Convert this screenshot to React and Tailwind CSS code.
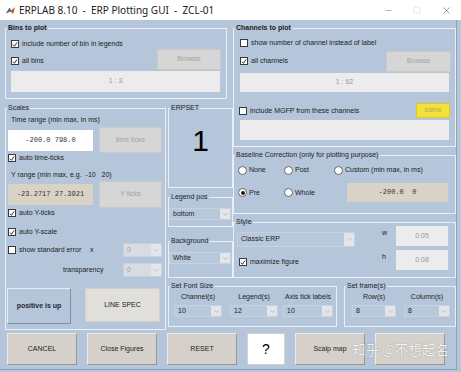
import React from "react";
import { ChevronDown, Minus, Square, X } from "lucide-react";

const FONT = { fontFamily: '"Liberation Sans", Arial, sans-serif' };

const Check = ({ checked }) => (
  <span className="w-[8px] h-[8px] bg-white border border-[#3a3a3a] flex items-center justify-center shrink-0">
    {checked && (
      <svg viewBox="0 0 8 8" className="w-[7px] h-[7px]">
        <path d="M1.2 4.2 L3.2 6.4 L6.8 1.2" fill="none" stroke="#1d1d1d" strokeWidth="1.2" />
      </svg>
    )}
  </span>
);

const CheckRow = ({ checked, label, className = "" }) => (
  <div className={`flex items-center gap-[3px] h-[8px] ${className}`}>
    <Check checked={checked} />
    <span className="text-[7px] leading-[8px] text-[#1c1c1c] whitespace-nowrap">{label}</span>
  </div>
);

const Radio = ({ on, label, className = "" }) => (
  <div className={`flex items-center gap-[2px] ${className}`}>
    <span className="w-[9px] h-[9px] rounded-full bg-white border border-[#666] flex items-center justify-center shrink-0">
      {on && <span className="w-[4px] h-[4px] rounded-full bg-[#1a1a1a]" />}
    </span>
    <span className="text-[7px] leading-[8px] text-[#1c1c1c] whitespace-nowrap">{label}</span>
  </div>
);

const Panel = ({ title, bold, className = "", children }) => (
  <fieldset className={`border border-[#e9eff6] min-w-0 p-0 ${className}`}>
    <legend
      className={`ml-[1px] px-[1px] text-[7px] leading-[8px] text-[#1c1c1c] ${bold ? "font-bold" : ""}`}
    >
      {title}
    </legend>
    {children}
  </fieldset>
);

const Drop = ({ value, className = "", disabled }) => (
  <div
    className={`flex items-stretch border border-[#c6d2e0] ${disabled ? "bg-[#d8dce2]" : "bg-[#b9c9dc]"} ${className}`}
  >
    <span
      className={`flex-1 flex items-center pl-[3px] text-[7px] ${disabled ? "text-[#9aa0a8]" : "text-[#1c1c1c]"}`}
    >
      {value}
    </span>
    <span className="w-[10px] bg-[#e2e5e9] flex items-center justify-center">
      <ChevronDown size={7} strokeWidth={1.5} color="#8a8f96" />
    </span>
  </div>
);

const GrayBtn = ({ label, className = "" }) => (
  <div
    className={`flex items-center justify-center bg-[#d6d6d6] border border-[#c9c9c9] text-[7px] text-[#a2a2a2] ${className}`}
  >
    {label}
  </div>
);

const Field = ({ value, className = "", mono }) => (
  <div
    className={`flex items-center justify-center text-[7px] ${mono ? "font-mono" : ""} ${className}`}
    style={mono ? { fontFamily: '"Liberation Mono", monospace' } : undefined}
  >
    {value}
  </div>
);

const BottomBtn = ({ label, className = "" }) => (
  <div
    className={`h-[32px] flex items-center justify-center bg-[#d5d1ca] border border-t-[#ecebe8] border-l-[#ecebe8] border-r-[#9b988f] border-b-[#9b988f] text-[7px] text-[#1c1c1c] ${className}`}
  >
    {label}
  </div>
);

export default function App() {
  return (
    <div className="w-[461px] h-[372px] bg-[#b5c6db] overflow-hidden relative" style={FONT}>
      {/* title bar */}
      <div className="h-[20px] bg-white flex items-center">
        <svg viewBox="0 0 10 10" className="ml-[6px] w-[9px] h-[9px]">
          <path d="M0 8 L4 2 L6 5 L10 1 L8 9 L5 6 Z" fill="#c0552a" />
          <path d="M0 8 L4 2 L5 6 Z" fill="#3d6fa8" />
        </svg>
        <span
          className="ml-[4px] text-[10px] text-[#222] whitespace-pre"
          style={{ fontFamily: '"Noto Sans", "Open Sans", sans-serif' }}
        >
          ERPLAB 8.10  -  ERP Plotting GUI  -  ZCL-01
        </span>
        <div className="ml-auto flex items-center">
          <Minus size={9} strokeWidth={1} color="#333" className="mr-[20px]" />
          <Square size={8} strokeWidth={1} color="#bbb" className="mr-[20px]" />
          <X size={11} strokeWidth={1} color="#333" className="mr-[9px]" />
        </div>
      </div>

      {/* body */}
      <div className="w-[457px] border-r border-b border-[#8fa1b8] pl-[5px] pt-[4px] pb-[4px]">
        <div className="grid grid-cols-[161px_2px_59px_6px_104px_7px_112px] grid-rows-[75px_5px_43px_4px_37px_5px_21px_4px_9px_10px_41px_4px_45px_3px]">
          {/* Bins to plot */}
          <Panel title="Bins to plot" bold className="col-start-1 col-end-4 row-start-1 row-end-2">
            <CheckRow checked label="include number of bin in legends" className="mt-[7px] ml-[5px] h-[10px]" />
            <div className="flex items-start h-[21px]">
              <CheckRow checked label="all bins" className="mt-[8px] ml-[5px]" />
              <GrayBtn label="Browse" className="ml-auto mr-[5px] w-[64px] h-[21px]" />
            </div>
            <Field value="1 : 3" className="mt-[1px] ml-[5px] mr-[6px] h-[21px] bg-[#ececec] text-[#9a9a9a]" />
          </Panel>

          {/* Channels to plot */}
          <Panel title="Channels to plot" bold className="col-start-5 col-end-8 row-start-1 row-end-4">
            <CheckRow label="show number of channel instead of label" className="mt-[6px] ml-[6px] h-[10px]" />
            <div className="flex items-start h-[21px] mt-[3px]">
              <CheckRow checked label="all channels" className="mt-[6px] ml-[6px]" />
              <GrayBtn label="Browse" className="ml-auto mr-[4px] w-[65px] h-[21px]" />
            </div>
            <Field value="1 : 62" className="mt-[1px] ml-[6px] mr-[6px] h-[19px] bg-[#ececec] text-[#9a9a9a]" />
            <div className="flex items-center h-[15px] mt-[11px]">
              <CheckRow label="include MGFP from these channels" className="ml-[5px]" />
              <div className="ml-auto mr-[5px] w-[34px] h-[15px] bg-[#f4e13a] border border-[#d9c93a] flex items-center justify-center text-[7px] text-[#b7a65e]">
                same
              </div>
            </div>
            <div className="mt-[2px] ml-[6px] mr-[6px] h-[20px] bg-[#ececec]" />
          </Panel>

          {/* Scales */}
          <Panel title="Scales" className="col-start-1 col-end-2 row-start-3 row-end-15">
            <div className="mt-[4px] ml-[5px] text-[7px] leading-[8px] text-[#1c1c1c]">Time range (min max, in ms)</div>
            <div className="flex items-center h-[26px] mt-[3px] ml-[2px]">
              <Field mono value="-200.0 798.0" className="w-[85px] h-[21px] bg-white text-[#333]" />
              <GrayBtn label="time ticks" className="ml-[6px] w-[63px] h-[26px]" />
            </div>
            <CheckRow checked label="auto time-ticks" className="mt-[1px] ml-[2px]" />
            <div className="mt-[9px] ml-[5px] text-[7px] leading-[8px] text-[#1c1c1c] whitespace-pre">
              Y range (min max, e.g.  -10   20)
            </div>
            <div className="flex items-center h-[27px] mt-[2px] ml-[2px]">
              <Field mono value="-23.2717 27.3921" className="w-[85px] h-[21px] bg-[#d9d3c6] text-[#333]" />
              <GrayBtn label="Y ticks" className="ml-[6px] w-[63px] h-[27px]" />
            </div>
            <CheckRow checked label="auto Y-ticks" className="mt-[1px] ml-[2px]" />
            <CheckRow checked label="auto Y-scale" className="mt-[11px] ml-[2px]" />
            <div className="flex items-center h-[14px] mt-[7px] ml-[2px]">
              <div className="w-[80px]">
                <CheckRow label="show standard error" />
              </div>
              <span className="ml-[2px] w-[33px] text-[7px] text-[#1c1c1c]">x</span>
              <Drop disabled value="0" className="w-[39px] h-[14px]" />
            </div>
            <div className="flex items-center h-[14px] mt-[6px] ml-[57px]">
              <span className="w-[60px] text-[7px] text-[#1c1c1c]">transparency</span>
              <Drop disabled value="0" className="w-[39px] h-[14px]" />
            </div>
            <div className="flex items-start mt-[11px] ml-[1px]">
              <div className="w-[64px] h-[36px] flex items-center justify-center bg-[#b5c6db] border border-t-[#e6edf5] border-l-[#e6edf5] border-r-[#7f8fa3] border-b-[#7f8fa3] text-[7px] font-bold text-[#1e2a3a]">
                positive is up
              </div>
              <div className="ml-[14px] w-[75px] h-[34px] flex items-center justify-center bg-[#e1dfdb] border border-[#d2d0cb] text-[7px] text-[#222]">
                LINE SPEC
              </div>
            </div>
          </Panel>

          {/* ERPSET */}
          <Panel title="ERPSET" className="col-start-3 col-end-5 row-start-3 row-end-6">
            <div className="h-[56px] flex items-center justify-center text-[30px] text-black">1</div>
          </Panel>

          {/* Legend pos */}
          <Panel title="Legend pos" className="col-start-3 col-end-5 row-start-7 row-end-10">
            <Drop value="bottom" className="mt-[7px] mr-[1px] h-[12px]" />
          </Panel>

          {/* Background */}
          <Panel title="Background" className="col-start-3 col-end-5 row-start-11 row-end-12">
            <Drop value="White" className="mt-[7px] mr-[1px] h-[12px]" />
          </Panel>

          {/* Baseline */}
          <Panel title="Baseline Correction (only for plotting purpose)" className="col-start-5 col-end-8 row-start-5 row-end-8">
            <div className="flex items-center h-[10px] mt-[6px] ml-[4px]">
              <Radio label="None" className="w-[46px]" />
              <Radio label="Post" className="w-[50px]" />
              <Radio label="Custom (min max, in ms)" />
            </div>
            <div className="flex items-center h-[19px] mt-[8px] ml-[4px]">
              <Radio on label="Pre" className="w-[46px]" />
              <Radio label="Whole" className="w-[50px]" />
              <Field mono value="-200.0  0" className="ml-[13px] w-[101px] h-[19px] bg-[#d9d3c6] text-[#333] whitespace-pre" />
            </div>
          </Panel>

          {/* Style */}
          <Panel title="Style" className="col-start-5 col-end-8 row-start-9 row-end-12">
            <div className="flex items-start">
              <div className="ml-[3px] w-[118px]">
                <Drop value="Classic ERP" className="mt-[6px] h-[15px]" />
                <CheckRow checked label="maximize figure" className="mt-[11px] ml-[2px]" />
              </div>
              <div className="ml-[27px] flex flex-col">
                <div className="flex items-start h-[20px]">
                  <span className="w-[14px] mt-[3px] text-[7px] leading-[8px] text-[#1c1c1c]">w</span>
                  <Field value="0.05" className="w-[52px] h-[20px] bg-[#ececec] text-[#9a9a9a]" />
                </div>
                <div className="flex items-start h-[20px] mt-[4px]">
                  <span className="w-[14px] mt-[3px] text-[7px] leading-[8px] text-[#1c1c1c]">h</span>
                  <Field value="0.08" className="w-[52px] h-[20px] bg-[#ececec] text-[#9a9a9a]" />
                </div>
              </div>
            </div>
          </Panel>

          {/* Set Font Size */}
          <Panel title="Set Font Size" className="col-start-3 col-end-6 row-start-13 row-end-14">
            <div className="flex mt-[3px] ml-[5px]">
              <div className="w-[48px] flex flex-col items-center">
                <span className="text-[7px] leading-[8px] text-[#1c1c1c]">Channel(s)</span>
                <Drop value="10" className="mt-[4px] w-full h-[12px]" />
              </div>
              <div className="ml-[8px] w-[48px] flex flex-col items-center">
                <span className="text-[7px] leading-[8px] text-[#1c1c1c]">Legend(s)</span>
                <Drop value="12" className="mt-[4px] w-full h-[12px]" />
              </div>
              <div className="ml-[5px] w-[50px] flex flex-col items-center">
                <span className="text-[7px] leading-[8px] text-[#1c1c1c] whitespace-nowrap">Axis tick labels</span>
                <Drop value="10" className="mt-[4px] w-full h-[12px]" />
              </div>
            </div>
          </Panel>

          {/* Set frame */}
          <Panel title="Set frame(s)" className="col-start-7 col-end-8 row-start-13 row-end-14">
            <div className="flex mt-[3px] ml-[7px]">
              <div className="w-[44px] flex flex-col items-center">
                <span className="text-[7px] leading-[8px] text-[#1c1c1c]">Row(s)</span>
                <Drop value="8" className="mt-[4px] w-full h-[12px]" />
              </div>
              <div className="ml-[8px] w-[46px] flex flex-col items-center">
                <span className="text-[7px] leading-[8px] text-[#1c1c1c]">Column(s)</span>
                <Drop value="8" className="mt-[4px] w-full h-[12px]" />
              </div>
            </div>
          </Panel>
        </div>

        {/* bottom buttons */}
        <div className="flex items-center gap-[10px] mt-[3px] ml-[2px]">
          <BottomBtn label="CANCEL" className="w-[70px]" />
          <BottomBtn label="Close Figures" className="w-[70px]" />
          <BottomBtn label="RESET" className="w-[70px]" />
          <div className="w-[38px] h-[32px] bg-white border border-[#d0d0d0] flex items-center justify-center text-[14px] text-black">
            ?
          </div>
          <BottomBtn label="Scalp map" className="w-[70px]" />
          <BottomBtn label="" className="w-[70px]" />
        </div>
      </div>

      {/* watermark */}
      <div
        className="absolute left-[352px] top-[340px] text-[13.5px] leading-[18px] text-white/90 whitespace-nowrap [text-shadow:0_0_1px_rgba(60,60,60,0.6)]"
        style={{ fontFamily: '"Noto Sans CJK SC", "Noto Sans", sans-serif' }}
      >
        知乎 @不想起名
      </div>
    </div>
  );
}
